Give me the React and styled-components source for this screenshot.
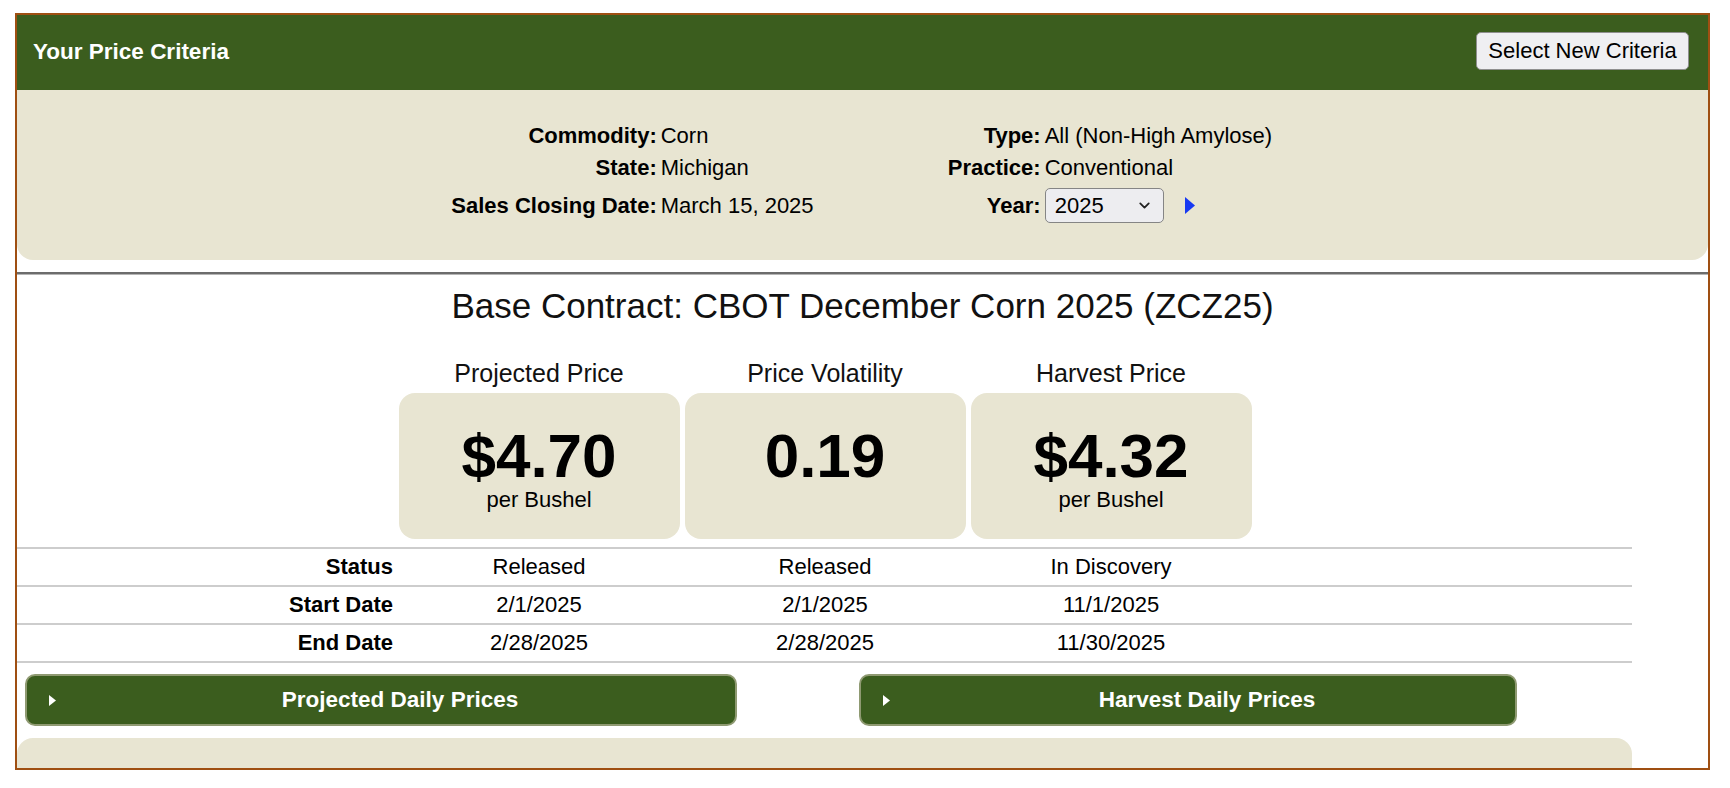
import styled, { createGlobalStyle } from "styled-components";
import { ChevronDown } from "lucide-react";

const GREEN = "#3b5d1e";
const BEIGE = "#e8e5d2";
const COLUMNS = "379px repeat(3, 286px) 1fr";

const criteria = [
  [
    ["Commodity:", "Corn"],
    ["State:", "Michigan"],
    ["Sales Closing Date:", "March 15, 2025"],
  ],
  [
    ["Type:", "All (Non-High Amylose)"],
    ["Practice:", "Conventional"],
  ],
];

const prices = [
  { label: "Projected Price", value: "$4.70", unit: "per Bushel" },
  { label: "Price Volatility", value: "0.19", unit: "" },
  { label: "Harvest Price", value: "$4.32", unit: "per Bushel" },
];

const rows = [
  { name: "Status", values: ["Released", "Released", "In Discovery"] },
  { name: "Start Date", values: ["2/1/2025", "2/1/2025", "11/1/2025"] },
  { name: "End Date", values: ["2/28/2025", "2/28/2025", "11/30/2025"] },
];

function Triangle({ color, w, h }) {
  return (
    <svg width={w} height={h} viewBox={`0 0 ${w} ${h}`}>
      <polygon points={`0,0 ${w},${h / 2} 0,${h}`} fill={color} />
    </svg>
  );
}

export default function App() {
  return (
    <>
      <GlobalStyle />
      <Frame>
        <Header>
          <HeaderTitle>Your Price Criteria</HeaderTitle>
          <HeaderButton>Select New Criteria</HeaderButton>
        </Header>

        <CriteriaPanel>
          <CriteriaGrid>
            <Label>{criteria[0][0][0]}</Label>
            <Value>{criteria[0][0][1]}</Value>
            <Label>{criteria[1][0][0]}</Label>
            <Value>{criteria[1][0][1]}</Value>

            <Label>{criteria[0][1][0]}</Label>
            <Value>{criteria[0][1][1]}</Value>
            <Label>{criteria[1][1][0]}</Label>
            <Value>{criteria[1][1][1]}</Value>

            <Label>{criteria[0][2][0]}</Label>
            <Value>{criteria[0][2][1]}</Value>
            <Label>Year:</Label>
            <YearCell>
              <SelectWrap>
                <YearSelect defaultValue="2025">
                  <option>2025</option>
                  <option>2024</option>
                  <option>2023</option>
                </YearSelect>
                <Chevron size={17} strokeWidth={2.5} />
              </SelectWrap>
              <Triangle color="#1739f2" w={10} h={17} />
            </YearCell>
          </CriteriaGrid>
        </CriteriaPanel>

        <Divider />

        <ContractTitle>Base Contract: CBOT December Corn 2025 (ZCZ25)</ContractTitle>

        <Content>
          <PriceGrid>
            <span />
            {prices.map((p) => (
              <PriceLabel key={p.label}>{p.label}</PriceLabel>
            ))}
            <span />
            <span />
            {prices.map((p) => (
              <PriceCard key={p.label}>
                <PriceValue>{p.value}</PriceValue>
                <PriceUnit>{p.unit}</PriceUnit>
              </PriceCard>
            ))}
            <span />
          </PriceGrid>

          <Table>
            {rows.map((r) => (
              <Row key={r.name}>
                <RowName>{r.name}</RowName>
                {r.values.map((v, i) => (
                  <Cell key={i}>{v}</Cell>
                ))}
                <span />
              </Row>
            ))}
          </Table>

          <ButtonRow>
            <DailyButton>
              <Triangle color="#fff" w={7} h={11} />
              <span>Projected Daily Prices</span>
            </DailyButton>
            <DailyButton>
              <Triangle color="#fff" w={7} h={11} />
              <span>Harvest Daily Prices</span>
            </DailyButton>
          </ButtonRow>

          <BottomPanel />
        </Content>
      </Frame>
    </>
  );
}

const GlobalStyle = createGlobalStyle`
  * {
    box-sizing: border-box;
  }

  body {
    margin: 0;
    background: #fff;
    font-family: "Liberation Sans", Arial, sans-serif;
    color: #000;
  }
`;

const Frame = styled.div`
  margin: 13px 0 0 15px;
  width: 1695px;
  height: 757px;
  border: 2px solid #9f4f12;
  overflow: hidden;
`;

const Header = styled.div`
  height: 75px;
  display: flex;
  align-items: center;
  justify-content: space-between;
  padding: 0 19px 0 16px;
  background: ${GREEN};
`;

const HeaderTitle = styled.span`
  color: #fff;
  font-size: 22.5px;
  font-weight: 700;
  margin-top: -2px;
`;

const HeaderButton = styled.button`
  height: 38px;
  width: 213px;
  margin-top: -3px;
  padding: 0 10px;
  font-family: inherit;
  font-size: 22px;
  color: #000;
  background: #efeff2;
  border: 1px solid #8f8f8f;
  border-radius: 5px;
`;

const CriteriaPanel = styled.div`
  height: 170px;
  padding-top: 34px;
  background: ${BEIGE};
  border-radius: 0 0 16px 16px;
`;

const CriteriaGrid = styled.div`
  display: grid;
  grid-template-columns: auto 283px auto 229px;
  grid-template-rows: 24px 24px 35px;
  column-gap: 4px;
  row-gap: 8px;
  justify-content: center;
  align-items: center;
  font-size: 22px;
  line-height: 24px;
`;

const Label = styled.span`
  font-weight: 700;
  text-align: right;
`;

const Value = styled.span`
  white-space: nowrap;
`;

const YearCell = styled.div`
  display: flex;
  align-items: center;
  gap: 21px;
`;

const SelectWrap = styled.div`
  position: relative;
  width: 119px;
  height: 35px;
`;

const YearSelect = styled.select`
  appearance: none;
  width: 100%;
  height: 100%;
  padding: 0 0 0 9px;
  font-family: inherit;
  font-size: 22px;
  color: #000;
  background: #ededf0;
  border: 1px solid #858585;
  border-radius: 5px;
`;

const Chevron = styled(ChevronDown)`
  position: absolute;
  right: 11px;
  top: 9px;
  color: #222;
  pointer-events: none;
`;

const Divider = styled.div`
  margin-top: 12px;
  height: 3px;
  background: #6c6c6c;
  border-bottom: 1px solid #b5b5b5;
`;

const ContractTitle = styled.h1`
  margin: 11px 0 0;
  font-size: 35px;
  font-weight: 400;
  line-height: 40px;
  text-align: center;
  color: #111;
`;

const Content = styled.div`
  width: 1615px;
`;

const PriceGrid = styled.div`
  display: grid;
  grid-template-columns: ${COLUMNS};
  grid-template-rows: 30px 146px;
  row-gap: 5px;
  margin-top: 32px;
`;

const PriceLabel = styled.div`
  text-align: center;
  font-size: 25px;
  line-height: 30px;
  color: #111;
`;

const PriceCard = styled.div`
  margin: 0 2.5px;
  padding-top: 32px;
  background: ${BEIGE};
  border-radius: 16px;
  text-align: center;
`;

const PriceValue = styled.div`
  font-size: 62px;
  font-weight: 700;
  line-height: 62px;
`;

const PriceUnit = styled.div`
  font-size: 22px;
  line-height: 26px;
`;

const Table = styled.div`
  margin-top: 8px;
  border-top: 2px solid #cdcdcd;
`;

const Row = styled.div`
  display: grid;
  grid-template-columns: ${COLUMNS};
  align-items: center;
  height: 38px;
  border-bottom: 2px solid #cdcdcd;
  font-size: 22px;
`;

const RowName = styled.span`
  font-weight: 700;
  text-align: right;
  padding-right: 3px;
`;

const Cell = styled.span`
  text-align: center;
`;

const ButtonRow = styled.div`
  display: grid;
  grid-template-columns: 712px 658px;
  column-gap: 122px;
  margin-top: 11px;
  padding-left: 8px;
`;

const DailyButton = styled.div`
  position: relative;
  height: 52px;
  display: flex;
  align-items: center;
  justify-content: center;
  padding-left: 38px;
  color: #fff;
  font-size: 22.5px;
  font-weight: 700;
  background: ${GREEN};
  border: 2px solid #8f9a72;
  border-radius: 10px;

  svg {
    position: absolute;
    left: 22px;
    top: 19px;
  }
`;

const BottomPanel = styled.div`
  margin-top: 12px;
  height: 60px;
  background: ${BEIGE};
  border-radius: 16px 16px 0 0;
`;
